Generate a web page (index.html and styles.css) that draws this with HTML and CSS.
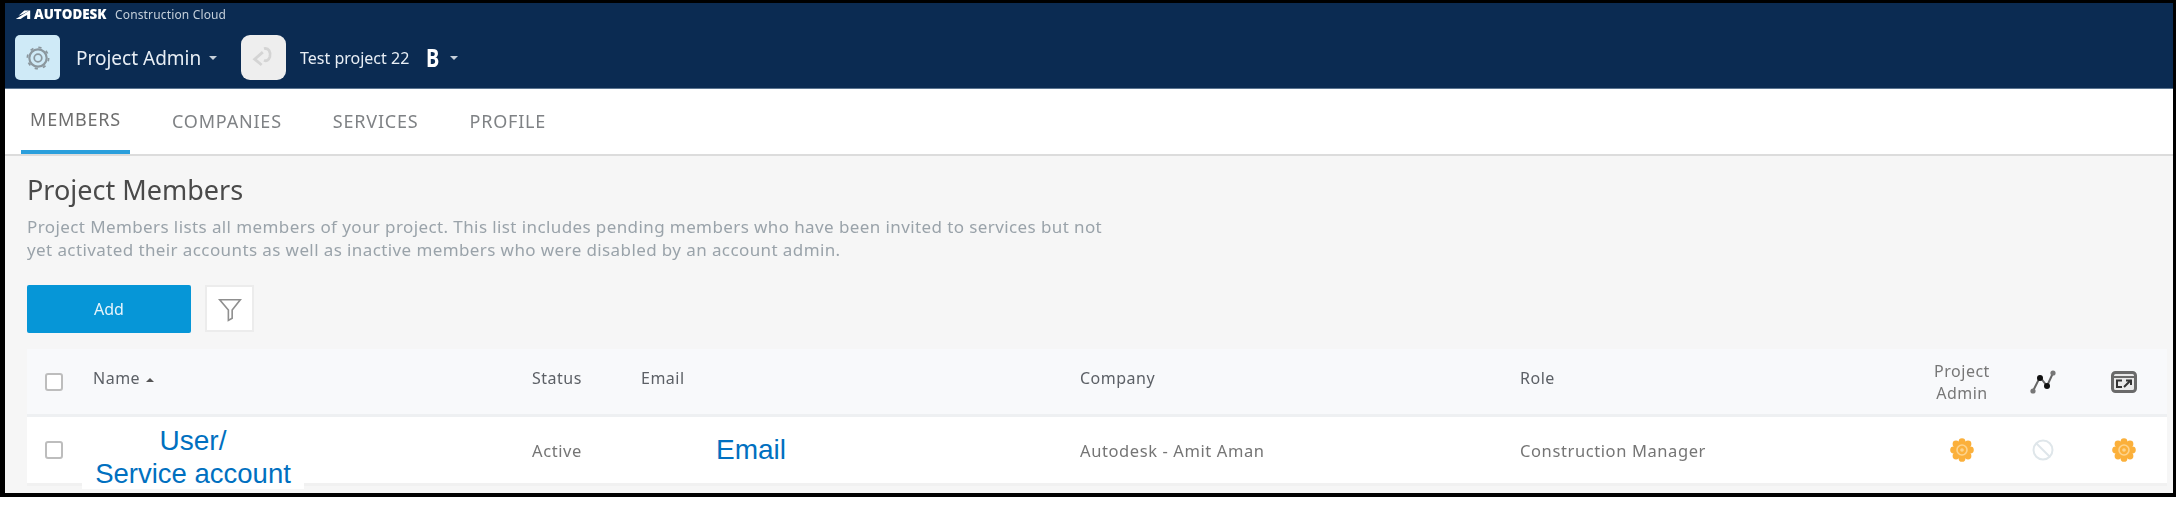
FILE: index.html
```html
<!DOCTYPE html>
<html lang="en">
<head>
  <meta charset="UTF-8">
  <title>Project Members</title>
  <link rel="stylesheet" href="styles.css">
</head>
<body>
  <div class="frame">
    <header class="topbar soft">
      <div class="brand">
        <svg class="brand-mark" viewBox="0 0 16 10"><path d="M0 10 8.5 4.6 15 .6H16V10H12.6V5.6L9 7.6 5.4 10Z" fill="#fff"/><path d="M3 6.5 9.5 .6H15L8 4.5Z" fill="#fff"/></svg>
        <span class="brand-name">AUTODESK</span>
        <span class="brand-sub">Construction Cloud</span>
      </div>
      <div class="product-row">
        <div class="tile tile-gear">
          <svg viewBox="0 0 24 24" width="26" height="26" fill="none" stroke="#8b979e">
            <circle cx="12" cy="12" r="8" stroke-width="2"/>
            <circle cx="12" cy="12" r="3.5" stroke-width="1.6"/>
            <circle cx="12" cy="12" r="9.8" stroke-width="1.6" stroke-dasharray="3 4.7"/>
          </svg>
        </div>
        <span class="product-name">Project Admin</span>
        <span class="caret"></span>
        <div class="tile tile-project">
          <svg viewBox="0 0 24 24" width="28" height="28" fill="none" stroke="#d4d4d4" stroke-width="2.4">
            <path d="M10 18 4 13 11 7"/>
            <path d="M12 4c4-1 6 3 5 7-1 3-3 4-5 3"/>
          </svg>
        </div>
        <span class="project-name">Test project 22</span>
        <span class="build-mark">B</span>
        <span class="caret"></span>
      </div>
    </header>

    <nav class="tabs soft">
      <a class="tab active">MEMBERS</a>
      <a class="tab">COMPANIES</a>
      <a class="tab">SERVICES</a>
      <a class="tab">PROFILE</a>
    </nav>

    <main class="content">
      <h1 class="title soft">Project Members</h1>
      <p class="intro soft">Project Members lists all members of your project. This list includes pending members who have been invited to services but not<br>yet activated their accounts as well as inactive members who were disabled by an account admin.</p>

      <div class="actions soft">
        <button class="btn-add">Add</button>
        <button class="btn-filter">
          <svg viewBox="0 0 24 24" width="26" height="26" fill="none" stroke="#8f8f8f" stroke-width="1.5"><path d="M2.5 3.5H21.5L14 13V20.5L10.5 22.5V13Z"/></svg>
        </button>
      </div>

      <svg width="0" height="0" class="defs">
        <symbol id="gear-on" viewBox="0 0 24 24">
          <g fill="#fbb03b">
            <circle cx="12" cy="3.6" r="3.4"/><circle cx="12" cy="20.4" r="3.4"/>
            <circle cx="3.6" cy="12" r="3.4"/><circle cx="20.4" cy="12" r="3.4"/>
            <circle cx="6" cy="6" r="3.4"/><circle cx="18" cy="6" r="3.4"/>
            <circle cx="6" cy="18" r="3.4"/><circle cx="18" cy="18" r="3.4"/>
            <circle cx="12" cy="12" r="8"/>
          </g>
          <circle cx="12" cy="12" r="5" fill="none" stroke="#fdd48e" stroke-width="1.6"/>
          <circle cx="12" cy="12" r="1.8" fill="#fdd48e"/>
        </symbol>
      </svg>

      <div class="table">
        <div class="row row-head">
          <div class="cell soft"><span class="check"></span></div>
          <div class="cell cell-label soft">Name <span class="sort"></span></div>
          <div class="cell cell-label soft">Status</div>
          <div class="cell cell-label soft">Email</div>
          <div class="cell cell-label soft">Company</div>
          <div class="cell cell-label soft">Role</div>
          <div class="cell cell-center soft">Project<br>Admin</div>
          <div class="cell cell-center soft">
            <svg viewBox="0 0 28 28" width="28" height="28" fill="none">
              <path d="M4 23 11 9 18 18 24 5" stroke="#666" stroke-width="2"/>
              <circle cx="4" cy="23" r="2.6" fill="#777"/>
              <circle cx="11" cy="10" r="3" fill="#111"/>
              <circle cx="18" cy="18" r="3" fill="#111"/>
              <circle cx="24" cy="5" r="2.6" fill="#777"/>
            </svg>
          </div>
          <div class="cell cell-center soft">
            <svg viewBox="0 0 26 22" width="26" height="22" fill="none">
              <rect x="1.5" y="1.5" width="23" height="19" rx="3" fill="#e9e9e9" stroke="#6a6a6a" stroke-width="3"/>
              <path d="M2 6H24" stroke="#6a6a6a" stroke-width="2"/>
              <path d="M11 9.5H6V16H11" stroke="#333" stroke-width="2"/>
              <path d="M13 16 20 9M15 9.5H20V14" stroke="#333" stroke-width="2"/>
            </svg>
          </div>
        </div>
        <div class="row row-body">
          <div class="cell soft"><span class="check"></span></div>
          <div class="cell"></div>
          <div class="cell soft">Active</div>
          <div class="cell"><span class="note note-email">Email</span></div>
          <div class="cell soft">Autodesk - Amit Aman</div>
          <div class="cell soft">Construction Manager</div>
          <div class="cell cell-center soft"><svg width="24" height="24"><use href="#gear-on"/></svg></div>
          <div class="cell cell-center soft">
            <svg viewBox="0 0 22 22" width="22" height="22" fill="none" stroke="#dfe6ea" stroke-width="2"><circle cx="11" cy="11" r="9.5"/><path d="M4.5 4.5 17.5 17.5"/></svg>
          </div>
          <div class="cell cell-center soft"><svg width="24" height="24"><use href="#gear-on"/></svg></div>
          <div class="note note-name">User/<br><span class="note-wide">Service account</span></div>
        </div>
      </div>
    </main>
  </div>
</body>
</html>
```

FILE: styles.css
```css
* {
  box-sizing: border-box;
}
body {
  margin: 0;
  background: #fff;
  font-family: "Noto Sans", sans-serif;
}
.frame {
  height: 497px;
  border: solid #000;
  border-width: 3px 3px 4px 5px;
  display: flex;
  flex-direction: column;
  overflow: hidden;
}
/* the app part of the picture is a soft, scaled-up capture */
.soft {
  filter: blur(.5px);
}

/* top bar */
.topbar {
  height: 86px;
  flex: none;
  background: #0b2b52;
  border-bottom: 1px solid #5c7590;
  padding-left: 10px;
  color: #fff;
}
.brand {
  height: 23px;
  display: flex;
  align-items: center;
  font-size: 11px;
  line-height: 1;
}
.brand-mark {
  width: 16px;
  height: 9px;
  margin-right: 3px;
}
.brand-name {
  font-family: "Open Sans", sans-serif;
  font-weight: 800;
  font-size: 13.4px;
  width: 81px;
}
.brand-sub {
  color: #c4cfda;
  font-size: 12px;
  letter-spacing: .15px;
}
.product-row {
  display: flex;
  align-items: center;
  height: 45px;
  margin-top: 9px;
}
.tile {
  width: 45px;
  height: 45px;
  border-radius: 5px;
  display: flex;
  align-items: center;
  justify-content: center;
  flex: none;
}
.tile-gear {
  background: #cfeaf7;
}
.tile-project {
  background: #eeeeee;
  border-radius: 9px;
  margin-left: 24px;
}
.product-name {
  font-size: 19px;
  margin-left: 16px;
  width: 133px;
  color: #e8eef5;
}
.project-name {
  font-size: 16px;
  margin-left: 14px;
  width: 126px;
  color: #e8eef5;
}
.build-mark {
  font-size: 25px;
  font-weight: 700;
  line-height: 1;
  width: 24px;
  transform: scaleX(.8);
  transform-origin: left center;
}
.caret {
  width: 0;
  height: 0;
  border: 4px solid transparent;
  border-top: 4px solid #c7d0da;
  border-bottom: 0;
}

/* tabs */
.tabs {
  height: 67px;
  flex: none;
  display: flex;
  background: #fff;
  border-bottom: 2px solid #dcdcdc;
  padding-left: 16px;
}
.tab {
  font-size: 18px;
  letter-spacing: .8px;
  color: #7f8285;
  padding: 0 9px;
  margin-right: 33px;
  line-height: 64px;
  height: 65px;
}
.tab.active {
  color: #6e6e6e;
  border-bottom: 4px solid #2b9fdc;
  line-height: 60px;
}

/* page */
.content {
  flex: 1;
  background: #f6f6f6;
  padding: 17px 6px 0 22px;
}
.title {
  margin: 0;
  font-size: 27px;
  font-weight: 400;
  line-height: 34px;
  color: #4a4a4a;
}
.intro {
  margin: 8px 0 0;
  font-size: 17px;
  letter-spacing: .4px;
  line-height: 23px;
  color: #9aa3aa;
}
.actions {
  display: flex;
  gap: 14px;
  margin-top: 24px;
}
.btn-add {
  width: 164px;
  height: 48px;
  border: 0;
  border-radius: 2px;
  background: #0696d7;
  color: #e6f4fb;
  font: 16px "Noto Sans", sans-serif;
}
.btn-filter {
  width: 49px;
  height: 47px;
  padding: 0;
  border: 2px solid #ececec;
  background: #fff;
  display: flex;
  align-items: center;
  justify-content: center;
}
.defs {
  position: absolute;
}

/* table */
.table {
  margin-top: 16px;
}
.row {
  display: grid;
  grid-template-columns: 66px 439px 109px 439px 440px 402px 80px 81px 81px;
  position: relative;
}
.row-head {
  height: 68px;
  background: #f8f9fb;
  border-bottom: 3px solid #eef0f2;
  color: #5c6066;
  font-size: 16px;
  letter-spacing: .5px;
}
.row-body {
  height: 69px;
  background: #fff;
  border-bottom: 3px solid #f1f1f1;
  color: #757575;
  font-size: 16.5px;
  letter-spacing: .6px;
}
.cell {
  display: flex;
  align-items: center;
}
.cell-label {
  padding-bottom: 7px;
}
.cell-center {
  justify-content: center;
  text-align: center;
  line-height: 22px;
  color: #777;
}
.check {
  width: 18px;
  height: 18px;
  margin-left: 18px;
  border: 2px solid #bdbdbd;
  border-radius: 3px;
  background: #fff;
}
.sort {
  width: 0;
  height: 0;
  margin: 3px 0 0 6px;
  border: 4px solid transparent;
  border-top: 0;
  border-bottom: 4px solid #555;
}

/* blue callouts pasted on the screenshot */
.note {
  font-family: "Liberation Sans", sans-serif;
  color: #0070c0;
  font-size: 28px;
  letter-spacing: 0;
}
.note-email {
  margin-left: 75px;
}
.note-name {
  position: absolute;
  left: 55px;
  top: 7px;
  width: 222px;
  height: 65px;
  line-height: 33px;
  text-align: center;
  background: #fff;
}
.note-wide {
  font-size: 27.5px;
}
```
